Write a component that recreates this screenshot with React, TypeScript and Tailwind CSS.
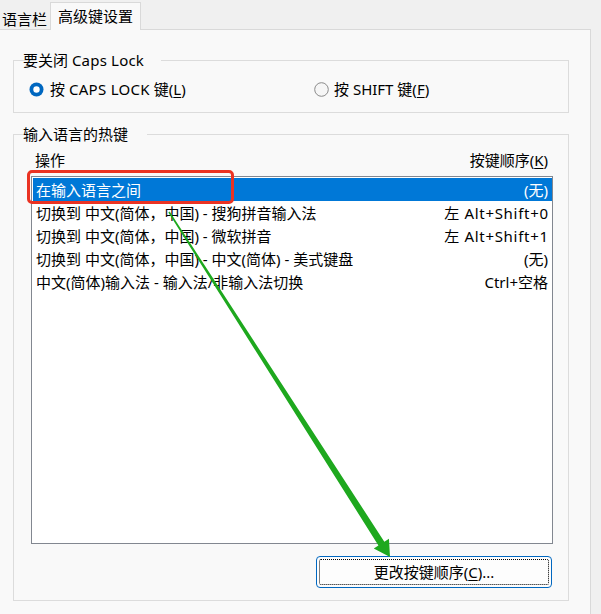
import React from "react";

const font = { fontFamily: '"Noto Sans", "Noto Sans CJK SC", sans-serif' };

function U({ c }: { c: string }) {
  return <span className="underline underline-offset-2">{c}</span>;
}

function Radio({ checked }: { checked: boolean }) {
  return (
    <svg width="15" height="15" viewBox="0 0 15 15" className="shrink-0">
      {checked ? (
        <>
          <circle cx="7.5" cy="7.5" r="7" fill="#0067c0" />
          <circle cx="7.5" cy="7.5" r="3.2" fill="#ffffff" />
        </>
      ) : (
        <circle cx="7.5" cy="7.5" r="6.8" fill="#f6f6f6" stroke="#8a8a8a" strokeWidth="1" />
      )}
    </svg>
  );
}

const rows: [string, string, boolean][] = [
  ["在输入语言之间", "(无)", false],
  ["切换到 中文(简体，中国) - 搜狗拼音输入法", "左 Alt+Shift+0", true],
  ["切换到 中文(简体，中国) - 微软拼音", "左 Alt+Shift+1", true],
  ["切换到 中文(简体，中国) - 中文(简体) - 美式键盘", "(无)", false],
  ["中文(简体)输入法 - 输入法/非输入法切换", "Ctrl+空格", false],
];

export default function App() {
  return (
    <div
      className="relative w-[601px] h-[614px] overflow-hidden bg-[#f0f0f0] text-[15px] leading-[20px] text-black"
      style={font}
    >
      {/* Tabs */}
      <div className="flex items-end h-[30px]">
        <div className="w-[50px] h-[21px] pl-[2px] flex items-start">语言栏</div>
        <div className="relative z-10 w-[91px] h-[28px] bg-[#f9f9f9] border border-b-0 border-[#d9d9d9] pl-[7px] pt-[3px]">
          高级键设置
        </div>
      </div>

      {/* Panel */}
      <div className="-mt-px w-[591px] h-[600px] bg-[#f9f9f9] border-t border-r border-[#d9d9d9] pt-[20px] pl-[13px]">
        <fieldset className="w-[556px] border border-[#dcdcdc] pl-[15px] pt-[9px] pb-[13px]">
          <legend className="ml-[7px] px-[2px] -translate-x-[15px]">
            要关闭 <span className="tracking-[0.2px]">Caps Lock</span>
          </legend>
          <div className="flex items-center h-[20px]">
            <div className="flex items-center gap-[6px] w-[285px]">
              <Radio checked />
              <span>
                按 <span className="tracking-[0.3px]">CAPS LOCK</span> 键(<U c="L" />)
              </span>
            </div>
            <div className="flex items-center gap-[5px]">
              <Radio checked={false} />
              <span>
                按 SHIFT 键(<U c="F" />)
              </span>
            </div>
          </div>
        </fieldset>

        <fieldset className="mt-[11px] w-[556px] border border-[#dcdcdc] pl-[17px] pr-[15px] pb-[12px]">
          <legend className="ml-[7px] px-[2px] -translate-x-[17px]">输入语言的热键</legend>
          <div className="flex justify-between h-[20px] mt-[6px] pl-[4px] pr-[5px]">
            <span>操作</span>
            <span>
              按键顺序(<U c="K" />)
            </span>
          </div>
          <div className="mt-[6px] h-[368px] bg-white border border-[#828790] p-px pr-0">
            {rows.map(([a, b, wide], i) => (
              <div
                key={i}
                className={
                  "flex justify-between items-center h-[23px] pl-[3px] pr-[4px] " +
                  (i === 0 ? "bg-[#0078d7] text-white" : "")
                }
              >
                <span>{a}</span>
                <span className={wide ? "tracking-[0.7px] -mr-[0.7px]" : ""}>{b}</span>
              </div>
            ))}
          </div>
          <div className="flex justify-end mt-[12px] pr-[1px]">
            <button className="w-[236px] h-[32px] bg-[#fdfdfd] border border-[#0067c0] rounded-[4px] p-[2px]">
              <div className="h-full border border-dotted border-black rounded-[2px] flex items-center justify-center">
                更改按键顺序(<U c="C" />)...
              </div>
            </button>
          </div>
        </fieldset>
      </div>

      {/* Annotations */}
      <div className="absolute left-[27px] top-[170px] w-[207px] h-[34px] border-[3px] border-[#ea3323] rounded-[5px] pointer-events-none" />
      <svg className="absolute left-0 top-0 pointer-events-none" width="601" height="614" viewBox="0 0 601 614">
        <polygon
          fill="#1ea81e"
          points="168.33,212.43 378.42,545.42 373.79,548.38 390,557 388.95,538.68 384.32,541.64 169.67,211.57"
        />
      </svg>
    </div>
  );
}
